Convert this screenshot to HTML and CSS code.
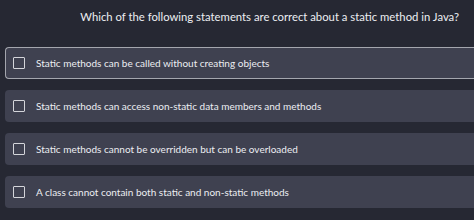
FILE: index.html
```html
<!DOCTYPE html>
<html lang="en">
<head>
    <meta charset="UTF-8">
    <title>Quiz</title>
    <link rel="stylesheet" href="styles.css">
</head>
<body>
    <div class="quiz">
        <h1 class="question">Which of the following statements are correct about a static method in Java?</h1>
        <div class="options">
            <label class="option selected"><span class="box"></span>Static methods can be called without creating objects</label>
            <label class="option"><span class="box"></span>Static methods can access non-static data members and methods</label>
            <label class="option"><span class="box"></span>Static methods cannot be overridden but can be overloaded</label>
            <label class="option"><span class="box"></span>A class cannot contain both static and non-static methods</label>
        </div>
    </div>
</body>
</html>
```
FILE: styles.css
```css
html, body {
    margin: 0;
    padding: 0;
    background: #262833;
    overflow: hidden;
}
body {
    font-family: Lato, "Liberation Sans", sans-serif;
    color: #eceef2;
}
.quiz {
    padding: 0 0 0 5px;
}
.question {
    margin: 0;
    height: 47px;
    line-height: 34px;
    padding-right: 15px;
    font-size: 11.3px;
    font-weight: normal;
    text-align: right;
}
.options {
    display: flex;
    flex-direction: column;
    gap: 11px;
}
.option {
    display: flex;
    align-items: center;
    height: 32px;
    box-sizing: border-box;
    padding-left: 8px;
    background: #3f4150;
    border-radius: 4px 0 0 4px;
    font-size: 10px;
}
.option.selected {
    border: 1px solid #a4a6ae;
    border-right: none;
    padding-left: 7px;
}
.box {
    width: 10px;
    height: 10px;
    border: 1.5px solid #d4d5da;
    border-radius: 1px;
    margin-right: 11px;
}
```
